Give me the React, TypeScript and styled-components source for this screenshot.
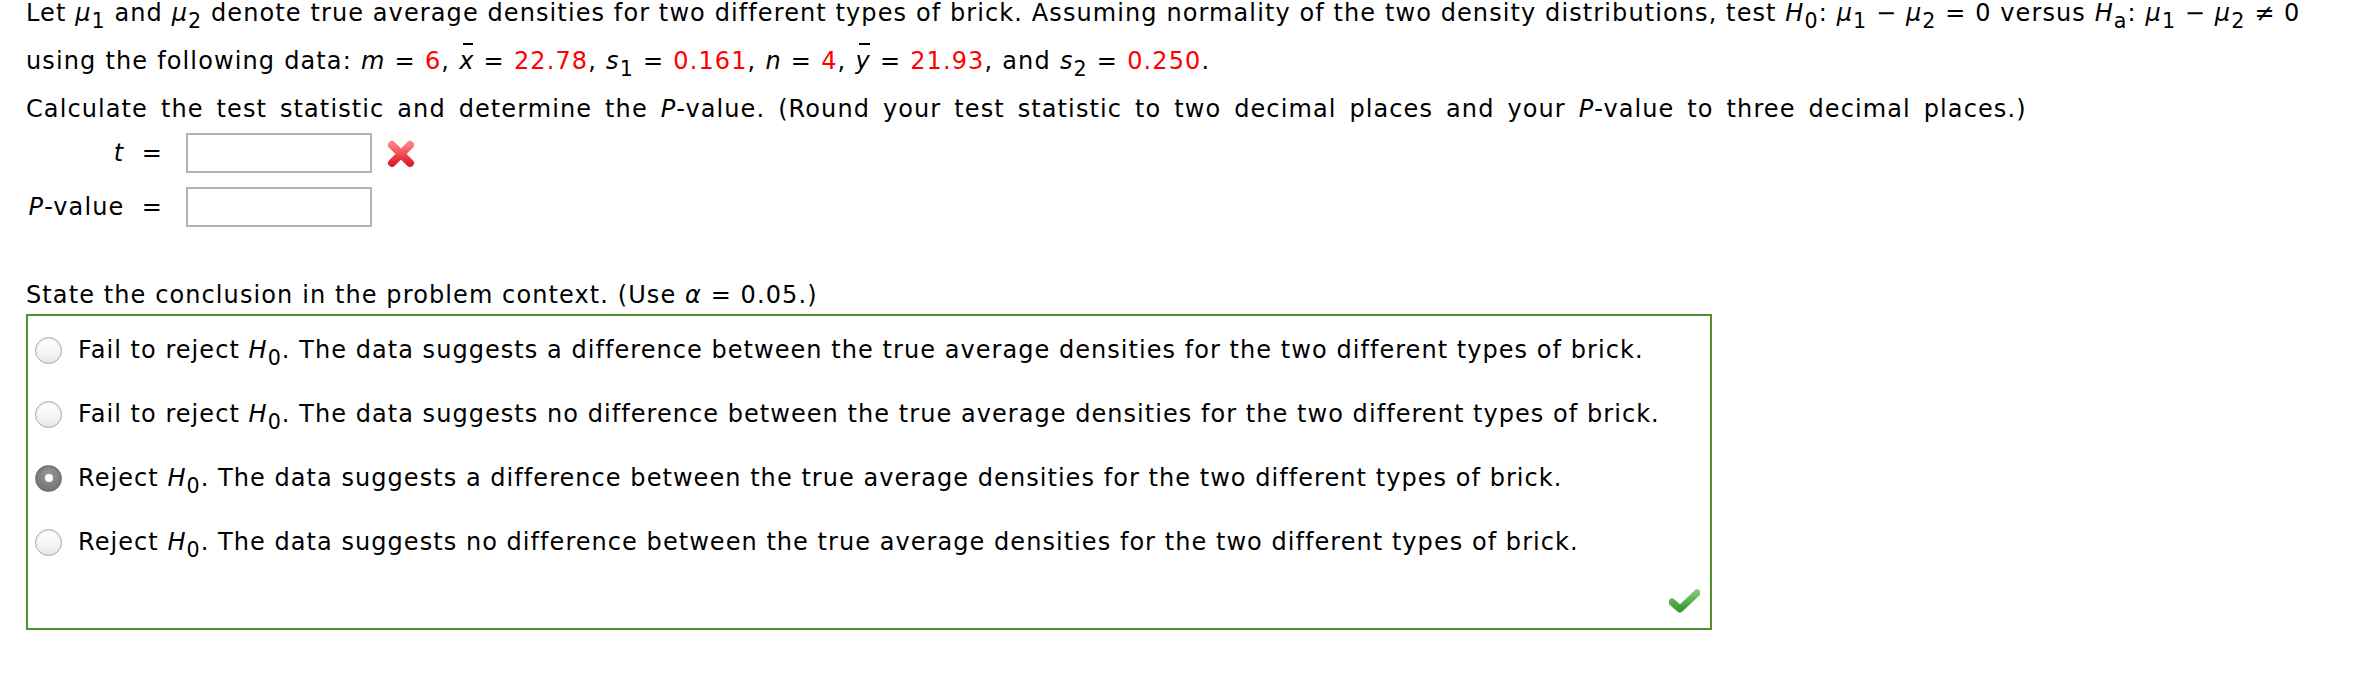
import React from 'react';
import styled, { createGlobalStyle } from 'styled-components';

const GlobalStyle = createGlobalStyle`
  body {
    margin: 0;
    background: #fff;
    color: #000;
    font-family: "DejaVu Sans", Verdana, sans-serif;
    font-size: 24px;
    letter-spacing: 1.1px;
  }
`;

type Option = {
  id: number,
  lead: string,
  body: string,
  checked: boolean,
}

const options: Option[] = [
  { id: 1, lead: 'Fail to reject', body: 'The data suggests a difference between the true average densities for the two different types of brick.', checked: false },
  { id: 2, lead: 'Fail to reject', body: 'The data suggests no difference between the true average densities for the two different types of brick.', checked: false },
  { id: 3, lead: 'Reject', body: 'The data suggests a difference between the true average densities for the two different types of brick.', checked: true },
  { id: 4, lead: 'Reject', body: 'The data suggests no difference between the true average densities for the two different types of brick.', checked: false },
];

const H0 = () => (<><I>H</I><Sub>0</Sub></>);
const Mu = ({ n }: { n: number }) => (<><I>μ</I><Sub>{n}</Sub></>);

const WrongIcon = () => (
  <svg width="28" height="28" viewBox="0 0 28 28">
    <defs>
      <linearGradient id="xg" x1="0" y1="0" x2="0" y2="1">
        <stop offset="0" stopColor="#ff7a7e" />
        <stop offset="1" stopColor="#e0222b" />
      </linearGradient>
    </defs>
    <path d="M5 5 L23 23 M23 5 L5 23" stroke="url(#xg)" strokeWidth="8" strokeLinecap="round" fill="none" />
  </svg>
);

const CorrectIcon = () => (
  <svg width="31" height="25" viewBox="0 0 31 25">
    <defs>
      <linearGradient id="cg" x1="0" y1="0" x2="0" y2="1">
        <stop offset="0" stopColor="#7cc46f" />
        <stop offset="1" stopColor="#3d9a3a" />
      </linearGradient>
    </defs>
    <path d="M3 13 L11 20 L28 4" stroke="url(#cg)" strokeWidth="7" strokeLinecap="round" strokeLinejoin="round" fill="none" />
  </svg>
);

const App = () => {
  return (
    <Page>
      <GlobalStyle />
      <Para>
        <Line>
          Let <Mu n={1} /> and <Mu n={2} /> denote true average densities for two different types of brick. Assuming normality of the two density distributions, test <H0 />: <Mu n={1} /> − <Mu n={2} /> = 0 versus <I>H</I><Sub>a</Sub>: <Mu n={1} /> − <Mu n={2} /> ≠ 0
        </Line>
        <Line $spread={0.4}>
          using the following data: <I>m</I> = <Red>6</Red>, <Bar><I>x</I></Bar> = <Red>22.78</Red>, <I>s</I><Sub>1</Sub> = <Red>0.161</Red>, <I>n</I> = <Red>4</Red>, <Bar><I>y</I></Bar> = <Red>21.93</Red>, and <I>s</I><Sub>2</Sub> = <Red>0.250</Red>.
        </Line>
        <Line $spread={4.2}>
          Calculate the test statistic and determine the <I>P</I>-value. (Round your test statistic to two decimal places and your <I>P</I>-value to three decimal places.)
        </Line>
      </Para>

      <AnswerGrid>
        <Label><I>t</I>&nbsp; =</Label>
        <Field />
        <Mark><WrongIcon /></Mark>
        <Label><I>P</I>-value&nbsp; =</Label>
        <Field />
        <Mark />
      </AnswerGrid>

      <Prompt>State the conclusion in the problem context. (Use <I>α</I> = 0.05.)</Prompt>

      <Frame>
        {options.map(item => (
          <Row key={item.id}>
            <Radio $checked={item.checked} />
            <span>{item.lead} <H0 />. {item.body}</span>
          </Row>
        ))}
        <Footer>
          <CorrectIcon />
        </Footer>
      </Frame>
    </Page>
  );
};

const Page = styled.div`
  padding: 0 0 0 26px;
  width: 2330px;
  height: 692px;
  overflow: hidden;
`;

const Para = styled.div`
  margin: -11px 0 0;
  line-height: 48px;
  white-space: nowrap;
`;

const Line = styled.div<{ $spread?: number }>`
  word-spacing: ${({ $spread }) => $spread ? `${$spread}px` : 'normal'};
`;

const I = styled.i`
  font-style: italic;
`;

const Sub = styled.span`
  font-size: 0.86em;
  vertical-align: -0.32em;
  line-height: 0;
`;

const Red = styled.span`
  color: #ff0000;
`;

const Bar = styled.span`
  display: inline-block;
  position: relative;
  line-height: 1;

  &::before{
    content: "";
    position: absolute;
    left: 4px;
    right: 1px;
    top: -6px;
    height: 2px;
    background: #000;
  }
`;

const AnswerGrid = styled.div`
  display: grid;
  grid-template-columns: 137px 186px 44px;
  grid-auto-rows: 40px;
  column-gap: 23px;
  row-gap: 14px;
`;

const Label = styled.div`
  display: flex;
  align-items: center;
  justify-content: flex-end;
  white-space: nowrap;
`;

const Field = styled.div`
  box-sizing: border-box;
  border: 2px solid #b3b3b3;
  background: #fff;
`;

const Mark = styled.div`
  display: flex;
  align-items: center;
  margin-left: -8px;
  padding-top: 2px;
`;

const Prompt = styled.p`
  margin: 49px 0 0;
  line-height: 38px;
`;

const Frame = styled.div`
  width: 1686px;
  box-sizing: border-box;
  border: 2px solid #4f9128;
  padding-top: 2px;
  letter-spacing: 1.05px;
`;

const Row = styled.div`
  display: flex;
  align-items: center;
  gap: 16px;
  height: 64px;
  padding-left: 7px;
  white-space: nowrap;
`;

const Radio = styled.span<{ $checked: boolean }>`
  flex: none;
  position: relative;
  width: 27px;
  height: 27px;
  box-sizing: border-box;
  border-radius: 50%;
  border: 1px solid ${({ $checked }) => $checked ? '#6f6f6f' : '#a9a9a9'};
  background: ${({ $checked }) => $checked
    ? 'radial-gradient(circle at 50% 35%, #9a9a9a 0%, #7b7b7b 60%, #6a6a6a 100%)'
    : 'linear-gradient(#ffffff, #f2f2f2 70%, #e4e4e4)'};
  box-shadow: inset 0 1px 2px rgba(0, 0, 0, 0.12);

  &::after{
    content: "";
    display: ${({ $checked }) => $checked ? 'block' : 'none'};
    position: absolute;
    left: 50%;
    top: 50%;
    width: 8px;
    height: 8px;
    margin: -4px 0 0 -4px;
    border-radius: 50%;
    background: #fff;
  }
`;

const Footer = styled.div`
  height: 54px;
  display: flex;
  justify-content: flex-end;
  align-items: flex-end;
  padding: 0 10px 14px 0;
  box-sizing: border-box;
`;

export default App;
